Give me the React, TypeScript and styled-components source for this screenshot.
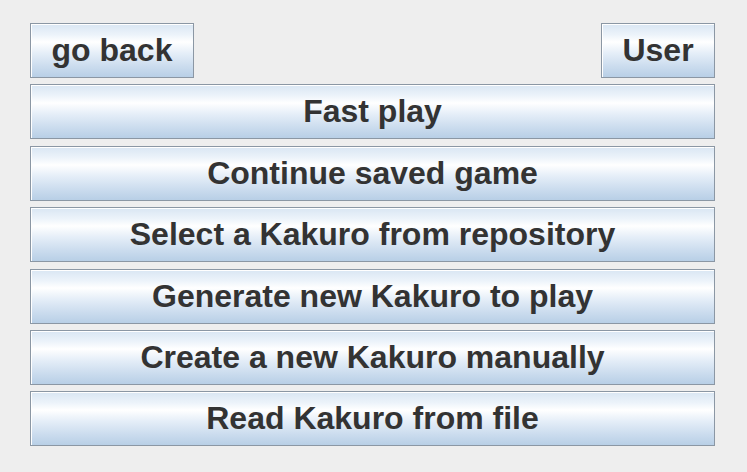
import { FC } from "react";
import styled, { createGlobalStyle } from "styled-components";

const GlobalStyle = createGlobalStyle`
  html, body {
    margin: 0;
    padding: 0;
    background: #eeeeee;
  }
`;

const Page = styled.div({
  width: 747,
  height: 472,
  boxSizing: "border-box",
  padding: "23px 32px 0 30px",
  display: "flex",
  flexDirection: "column",
  gap: 6.4,
  fontFamily: '"Liberation Sans", Arial, sans-serif',
});

const TopBar = styled.div({
  display: "flex",
  justifyContent: "space-between",
});

type IButton = {
  w?: number;
};

const MetalButton = styled.button<IButton>(({ w }) => ({
  height: 55,
  width: w ? w : "100%",
  boxSizing: "border-box",
  border: "1px solid #8b97a4",
  boxShadow: "inset 1px 1px 0 #ffffff",
  background:
    "linear-gradient(to bottom, #d9e6f3 0%, #ecf3fa 20%, #ffffff 34%, #e5eef8 55%, #cbdcee 80%, #b8cfe6 100%)",
  color: "#333333",
  fontFamily: "inherit",
  fontWeight: "bold",
  fontSize: 32,
  padding: 0,
  display: "flex",
  alignItems: "center",
  justifyContent: "center",
  cursor: "pointer",
}));

const menu = [
  "Fast play",
  "Continue saved game",
  "Select a Kakuro from repository",
  "Generate new Kakuro to play",
  "Create a new Kakuro manually",
  "Read Kakuro from file",
];

const App: FC = () => {
  return (
    <>
      <GlobalStyle />
      <Page>
        <TopBar>
          <MetalButton w={164}>go back</MetalButton>
          <MetalButton w={114}>User</MetalButton>
        </TopBar>
        {menu.map((label) => (
          <MetalButton key={label}>{label}</MetalButton>
        ))}
      </Page>
    </>
  );
};

export default App;
